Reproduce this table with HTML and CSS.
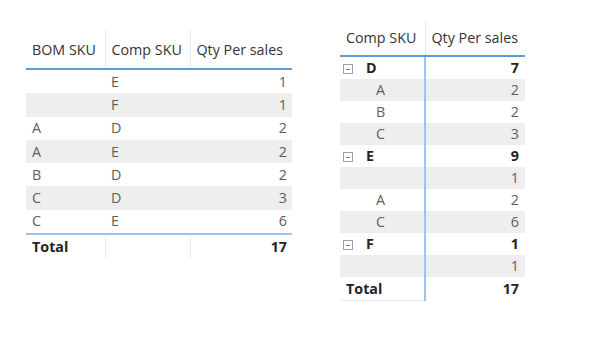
FILE: index.html
```html
<!DOCTYPE html>
<html>
<head>
<meta charset="utf-8">
<link rel="stylesheet" href="styles.css">
</head>
<body>
<div class="page">
  <table class="grid flat">
    <colgroup><col class="c1"><col class="c2"><col class="c3"></colgroup>
    <thead>
      <tr><th>BOM SKU</th><th>Comp SKU</th><th class="last">Qty Per sales</th></tr>
    </thead>
    <tbody>
      <tr><td></td><td>E</td><td class="num">1</td></tr>
      <tr class="alt"><td></td><td>F</td><td class="num">1</td></tr>
      <tr><td>A</td><td>D</td><td class="num">2</td></tr>
      <tr class="alt"><td>A</td><td>E</td><td class="num">2</td></tr>
      <tr><td>B</td><td>D</td><td class="num">2</td></tr>
      <tr class="alt"><td>C</td><td>D</td><td class="num">3</td></tr>
      <tr><td>C</td><td>E</td><td class="num">6</td></tr>
    </tbody>
    <tfoot>
      <tr><td class="bold">Total</td><td class="sep"></td><td class="num bold sep">17</td></tr>
    </tfoot>
  </table>

  <table class="grid matrix">
    <colgroup><col class="m1"><col class="m2"></colgroup>
    <thead>
      <tr><th>Comp SKU</th><th class="last">Qty Per sales</th></tr>
    </thead>
    <tbody>
      <tr class="grp"><td class="k"><span class="tog"></span><span class="bold">D</span></td><td class="num bold">7</td></tr>
      <tr class="alt"><td class="k child">A</td><td class="num">2</td></tr>
      <tr><td class="k child">B</td><td class="num">2</td></tr>
      <tr class="alt"><td class="k child">C</td><td class="num">3</td></tr>
      <tr class="grp"><td class="k"><span class="tog"></span><span class="bold">E</span></td><td class="num bold">9</td></tr>
      <tr class="alt"><td class="k child"></td><td class="num">1</td></tr>
      <tr><td class="k child">A</td><td class="num">2</td></tr>
      <tr class="alt"><td class="k child">C</td><td class="num">6</td></tr>
      <tr class="grp"><td class="k"><span class="tog"></span><span class="bold">F</span></td><td class="num bold">1</td></tr>
      <tr class="alt"><td class="k child"></td><td class="num">1</td></tr>
      <tr class="tot"><td class="k bold">Total</td><td class="num bold">17</td></tr>
    </tbody>
  </table>
</div>
</body>
</html>
```

FILE: styles.css
```css
html, body {
  margin: 0;
  padding: 0;
  background: #ffffff;
}
body {
  width: 595px;
  height: 360px;
  overflow: hidden;
  font-family: "Open Sans", "Noto Sans", "Liberation Sans", sans-serif;
  font-size: 14.3px;
  color: #605e5c;
}
.page {
  display: flex;
  align-items: flex-start;
  gap: 48px;
  padding-left: 26px;
}
.grid {
  border-collapse: collapse;
  table-layout: fixed;
}
.grid th {
  font-weight: normal;
  color: #333333;
  text-align: left;
  padding: 0 6px;
  border-right: 1px solid #e3ecf5;
  white-space: nowrap;
}
.grid th.last {
  border-right: none;
}
.grid td {
  padding: 0 5px 0 6px;
  white-space: nowrap;
}
.grid .num {
  text-align: right;
}
.grid .alt td {
  background: #eeeeee;
}
.bold {
  font-weight: 700;
  color: #252423;
}

/* left flat table */
.flat {
  margin-top: 30px;
  width: 266px;
}
.flat col.c1 { width: 79px; }
.flat col.c2 { width: 85px; }
.flat col.c3 { width: 102px; }
.flat thead th {
  height: 37px;
  border-bottom: 2px solid #5b9bd5;
  padding-top: 1px;
}
.flat tbody td {
  height: 23.3px;
  line-height: 18px;
}
.flat tfoot td {
  height: 23px;
  border-top: 2px solid #9dc3e6;
}
.flat tfoot td.sep {
  border-left: 1px solid #e3ecf5;
}

/* right matrix */
.matrix {
  margin-top: 20px;
  width: 185px;
}
.matrix col.m1 { width: 85px; }
.matrix col.m2 { width: 100px; }
.matrix thead th {
  height: 35px;
  border-bottom: 2px solid #5b9bd5;
}
.matrix tbody td {
  height: 22px;
  line-height: 18px;
}
.matrix td.k {
  border-right: 2px solid #9ec5ee;
  padding-left: 3px;
}
.matrix td.num {
  padding-right: 6px;
}
.matrix td.child {
  padding-left: 36px;
}
.matrix .tot td {
  height: 23px;
}
.matrix .tot td.k {
  padding-left: 6px;
  border-bottom: 1px solid #e6eef6;
}
.tog {
  display: inline-block;
  width: 10px;
  height: 10px;
  border: 1px solid #a0a0a0;
  margin-right: 13px;
  vertical-align: -1px;
  position: relative;
  box-sizing: border-box;
}
.tog::after {
  content: "";
  position: absolute;
  left: 2px;
  right: 2px;
  top: 4px;
  height: 1px;
  background: #808080;
}
```
